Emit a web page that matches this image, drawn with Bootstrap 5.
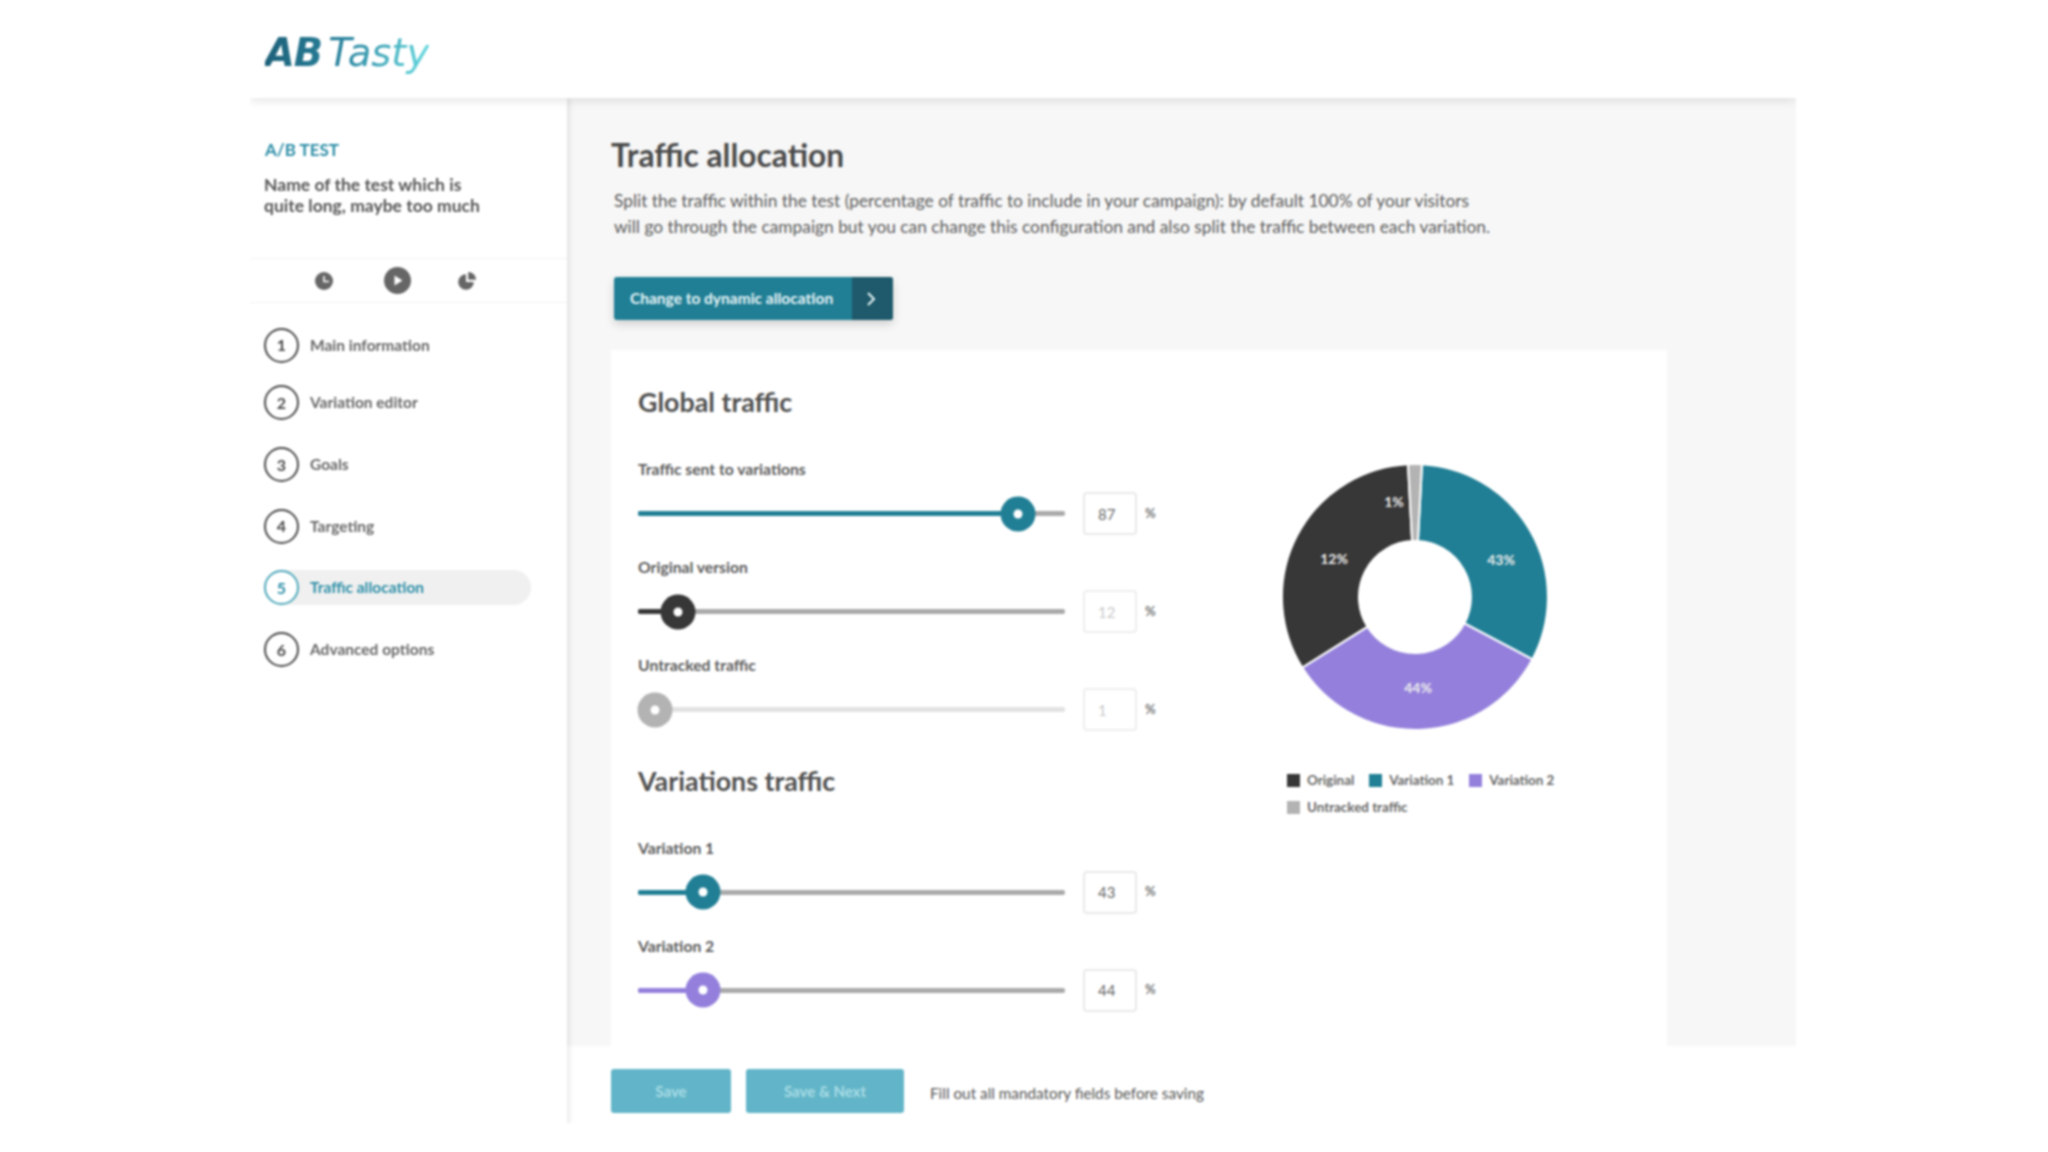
<!DOCTYPE html>
<html lang="en">
<head>
  <meta charset="UTF-8">
  <title>Traffic allocation</title>
  <link href="https://cdn.jsdelivr.net/npm/bootstrap@5.3.0/dist/css/bootstrap.min.css" rel="stylesheet">
  <script src="https://cdn.jsdelivr.net/npm/bootstrap@5.3.0/dist/js/bootstrap.bundle.min.js"></script>
  <style>
    body { background: #fff; font-family: Lato, "Liberation Sans", sans-serif; color: #555; overflow: hidden; }
    .app-frame { width: 1546px; height: 1124px; margin-left: 250px; filter: blur(.85px); }
    .app-head { height: 98px; padding: 6px 0 0 15px; position: relative; z-index: 2; box-shadow: 0 3px 10px rgba(0,0,0,.1); clip-path: inset(0 0 -16px 0); background: #fff; }
    .logo-text { font-family: "DejaVu Sans", sans-serif; font-style: italic; font-size: 38.5px; line-height: 45px; background: linear-gradient(100deg, #1d5f77 0%, #2a86a0 50%, #63dbe0 100%); -webkit-background-clip: text; background-clip: text; color: transparent; }
    .logo-text b { font-weight: 700; letter-spacing: -1px; margin-right: 6px; }
    .logo-text span { font-weight: 400; }
    .app-body { height: 1026px; }

    .side-col { width: 317px; flex: none; background: #fff; box-shadow: 2px 0 6px rgba(0,0,0,.1); clip-path: inset(0 -12px 0 0); position: relative; z-index: 1; }
    .test-type { color: #2b8da6; font-size: 17px; font-weight: 700; line-height: 20px; margin: 42px 15px 14px; }
    .test-name { font-size: 17.5px; font-weight: 700; line-height: 21px; color: #555; margin: 0 14px 42px; }
    .icon-strip { height: 45px; border-top: 1px solid #f2f2f2; border-bottom: 1px solid #f2f2f2; padding-left: 65px; gap: 51px; }
    .icon-pie { margin-left: -4px; }
    .step-list { margin: 24.7px 0 0 14px; gap: 26.7px; }
    .step-row { height: 35px; width: 267px; font-size: 15.5px; font-weight: 700; color: #666; }
    .step-row:first-child { margin-bottom: -4px; }
    .step-num { width: 35px; height: 35px; border: 2.5px solid #4a4a4a; border-radius: 50%; background: #fff; font-weight: 700; font-size: 16px; margin-right: 11px; flex: none; color: #4a4a4a; }
    .step-on { background: #f0f0f0; border-radius: 18px; color: #2b8da6; }
    .step-on .step-num { border-color: #4fa9bb; color: #2b8da6; }

    .main-col { min-width: 0; }
    .main-scroll { height: 948px; background: #f7f7f7; padding: 38px 0 0 44px; overflow: hidden; }
    .page-title { font-size: 31.7px; font-weight: 700; line-height: 38px; color: #4a4a4a; margin: 0 0 14px; }
    .page-desc { font-size: 17.33px; line-height: 26px; color: #5c5c5c; margin: 0 0 37px 3px; }
    .btn-dyn { background: #217f95; color: #e8f5f8; height: 43px; width: 279px; margin-left: 3px; padding: 0; border: 0; border-radius: 3px; font-size: 15.5px; font-weight: 700; box-shadow: 0 4px 10px rgba(0,0,0,.16); overflow: hidden; }
    .btn-dyn:hover { background: #217f95; color: #e8f5f8; }
    .btn-dyn-end { width: 41px; padding-right: 3px; background: #1e5a6b; }
    .traffic-card { width: 1056px; height: 800px; margin-top: 30px; background: #fff; padding: 36px 0 0 27px; border: 0; border-radius: 0; }
    .left-col { width: 642px; flex: none; }
    .group-title { font-size: 26.8px; font-weight: 700; line-height: 32px; color: #4f4f4f; margin: 0 0 41px; }
    .group-title.second { margin-top: 33.7px; }
    .slide-block { margin-bottom: 22px; }
    .slide-label { font-size: 15.7px; font-weight: 700; line-height: 20px; color: #5a5a5a; margin-bottom: 13px; }
    .slide-track { width: 427px; height: 5px; background: #aaa; border-radius: 2px; position: relative; margin-right: 18px; flex: none; }
    .slide-track.pale { background: #e2e2e2; }
    .slide-fill { height: 5px; border-radius: 2px; }
    .slide-thumb { position: absolute; top: 50%; width: 35px; height: 35px; border-radius: 50%; transform: translate(-50%, -50%); }
    .slide-thumb::after { content: ""; position: absolute; left: 13px; top: 13px; width: 9px; height: 9px; border-radius: 50%; background: #fff; }
    .pct-box { width: 54px; height: 43px; padding: 0 0 0 13px; font-size: 15px; color: #666; border: 2px solid #e9e9e9; border-radius: 4px; background: #fff; box-shadow: none; font-family: inherit; }
    .pct-box:disabled { color: #c9c9c9; background: #fff; border-color: #eee; }
    .pct-sign { font-size: 13px; font-weight: 700; color: #777; margin-left: 8px; }
    .tone-teal { background: #217f95; }
    .tone-dark { background: #373737; }
    .tone-purple { background: #9480dc; }
    .tone-grey { background: #b3b3b3; }
    .chart-col { margin-top: 75.5px; }
    .donut-num { font-family: Lato, sans-serif; font-size: 14px; font-weight: 700; fill: #eee; text-anchor: middle; }
    .legend-wrap { width: 300px; margin: 40px 0 0 7px; row-gap: 9px; column-gap: 15px; font-size: 13.4px; font-weight: 700; color: #666; }
    .legend-item { height: 18px; }
    .legend-swatch { width: 13px; height: 13px; margin-right: 7px; }

    .foot-bar { height: 78px; background: #fff; padding: 23px 0 0 44px; }
    .btn-save { height: 44px; background: #62b5c8; color: #a9dce6; border: 0; border-radius: 3px; font-size: 15px; font-weight: 700; padding: 0; }
    .btn-save:hover { background: #62b5c8; color: #a9dce6; }
    .save-one { width: 120px; }
    .save-two { width: 158px; margin-left: 15px; }
    .foot-note { font-size: 15.3px; line-height: 44px; margin-top: 2px; color: #555; margin-left: 26px; }
  </style>
</head>
<body>
<div class="app-frame">
  <!-- cabecera -->
  <header class="app-head d-flex align-items-center">
    <div class="logo-text"><b>AB</b><span>Tasty</span></div>
  </header>

  <div class="app-body d-flex">
    <!-- menu lateral -->
    <aside class="side-col">
      <div class="test-type">A/B TEST</div>
      <div class="test-name">Name of the test which is<br>quite long, maybe too much</div>
      <div class="icon-strip d-flex align-items-center">
        <svg width="18" height="18" viewBox="0 0 18 18"><circle cx="9" cy="9" r="9" fill="#666"/><path d="M9 4v5.5h5" fill="none" stroke="#fff" stroke-width="1.6"/></svg>
        <svg width="27" height="27" viewBox="0 0 27 27"><circle cx="13.5" cy="13.5" r="13.5" fill="#666"/><path d="M10.5 8.5v10l8-5z" fill="#fff"/></svg>
        <svg class="icon-pie" width="18" height="18" viewBox="0 0 18 18"><path d="M8 2.2a7.8 7.8 0 1 0 7.8 7.8H8z" fill="#666"/><path d="M10.2 0a7.8 7.8 0 0 1 7.8 7.8h-7.8z" fill="#666"/></svg>
      </div>
      <div class="step-list d-flex flex-column">
        <div class="step-row d-flex align-items-center"><span class="step-num d-flex align-items-center justify-content-center">1</span>Main information</div>
        <div class="step-row d-flex align-items-center"><span class="step-num d-flex align-items-center justify-content-center">2</span>Variation editor</div>
        <div class="step-row d-flex align-items-center"><span class="step-num d-flex align-items-center justify-content-center">3</span>Goals</div>
        <div class="step-row d-flex align-items-center"><span class="step-num d-flex align-items-center justify-content-center">4</span>Targeting</div>
        <div class="step-row step-on d-flex align-items-center"><span class="step-num d-flex align-items-center justify-content-center">5</span>Traffic allocation</div>
        <div class="step-row d-flex align-items-center"><span class="step-num d-flex align-items-center justify-content-center">6</span>Advanced options</div>
      </div>
    </aside>

    <main class="main-col flex-grow-1">
      <div class="main-scroll">
        <h1 class="page-title">Traffic allocation</h1>
        <p class="page-desc">Split the traffic within the test (percentage of traffic to include in your campaign): by default 100% of your visitors<br>will go through the campaign but you can change this configuration and also split the traffic between each variation.</p>
        <button type="button" class="btn btn-dyn d-flex align-items-stretch">
          <span class="flex-grow-1 d-flex align-items-center ps-3">Change to dynamic allocation</span>
          <span class="btn-dyn-end d-flex align-items-center justify-content-center">
            <svg width="10" height="16" viewBox="0 0 10 16"><path d="M2 2l6 6-6 6" fill="none" stroke="#e8f5f8" stroke-width="2"/></svg>
          </span>
        </button>

        <div class="card traffic-card d-flex flex-row">
          <div class="left-col">
            <h2 class="group-title">Global traffic</h2>

            <div class="slide-block">
              <div class="slide-label">Traffic sent to variations</div>
              <div class="d-flex align-items-center">
                <div class="slide-track"><div class="slide-fill tone-teal" style="width:89%"></div><div class="slide-thumb tone-teal" style="left:89%"></div></div>
                <input class="form-control pct-box" value="87"><span class="pct-sign">%</span>
              </div>
            </div>
            <div class="slide-block">
              <div class="slide-label">Original version</div>
              <div class="d-flex align-items-center">
                <div class="slide-track"><div class="slide-fill tone-dark" style="width:9.3%"></div><div class="slide-thumb tone-dark" style="left:9.3%"></div></div>
                <input class="form-control pct-box" value="12" disabled><span class="pct-sign">%</span>
              </div>
            </div>
            <div class="slide-block">
              <div class="slide-label">Untracked traffic</div>
              <div class="d-flex align-items-center">
                <div class="slide-track pale"><div class="slide-fill tone-grey" style="width:4%"></div><div class="slide-thumb tone-grey" style="left:4%"></div></div>
                <input class="form-control pct-box" value="1" disabled><span class="pct-sign">%</span>
              </div>
            </div>

            <h2 class="group-title second">Variations traffic</h2>

            <div class="slide-block">
              <div class="slide-label">Variation 1</div>
              <div class="d-flex align-items-center">
                <div class="slide-track"><div class="slide-fill tone-teal" style="width:15.3%"></div><div class="slide-thumb tone-teal" style="left:15.3%"></div></div>
                <input class="form-control pct-box" value="43"><span class="pct-sign">%</span>
              </div>
            </div>
            <div class="slide-block">
              <div class="slide-label">Variation 2</div>
              <div class="d-flex align-items-center">
                <div class="slide-track"><div class="slide-fill tone-purple" style="width:15.3%"></div><div class="slide-thumb tone-purple" style="left:15.3%"></div></div>
                <input class="form-control pct-box" value="44"><span class="pct-sign">%</span>
              </div>
            </div>
          </div>

          <div class="chart-col">
            <svg width="270" height="270" viewBox="-135 -135 270 270">
              <g stroke="#fff" stroke-width="2">
                <path fill="#217f95" d="M7 -132.8A133 133 0 0 1 117.4 62.4L49.4 26.3A56 56 0 0 0 2.9 -55.9Z"/>
                <path fill="#9480dc" d="M117.4 62.4A133 133 0 0 1 -112.8 70.5L-47.5 29.7A56 56 0 0 0 49.4 26.3Z"/>
                <path fill="#373737" d="M-112.8 70.5A133 133 0 0 1 -7 -132.8L-2.9 -55.9A56 56 0 0 0 -47.5 29.7Z"/>
                <path fill="#b3b3b3" d="M-7 -132.8A133 133 0 0 1 7 -132.8L2.9 -55.9A56 56 0 0 0 -2.9 -55.9Z"/>
              </g>
              <text class="donut-num" x="-21" y="-90">1%</text>
              <text class="donut-num" x="-81" y="-33">12%</text>
              <text class="donut-num" x="86" y="-32">43%</text>
              <text class="donut-num" x="3" y="96">44%</text>
            </svg>
            <div class="legend-wrap d-flex flex-wrap">
              <div class="legend-item d-flex align-items-center"><span class="legend-swatch tone-dark"></span>Original</div>
              <div class="legend-item d-flex align-items-center"><span class="legend-swatch tone-teal"></span>Variation 1</div>
              <div class="legend-item d-flex align-items-center"><span class="legend-swatch tone-purple"></span>Variation 2</div>
              <div class="legend-item d-flex align-items-center"><span class="legend-swatch tone-grey"></span>Untracked traffic</div>
            </div>
          </div>
        </div>
      </div>

      <div class="foot-bar d-flex align-items-start">
        <button type="button" class="btn btn-save save-one">Save</button>
        <button type="button" class="btn btn-save save-two">Save &amp; Next</button>
        <span class="foot-note">Fill out all mandatory fields before saving</span>
      </div>
    </main>
  </div>
</div>
</body>
</html>
